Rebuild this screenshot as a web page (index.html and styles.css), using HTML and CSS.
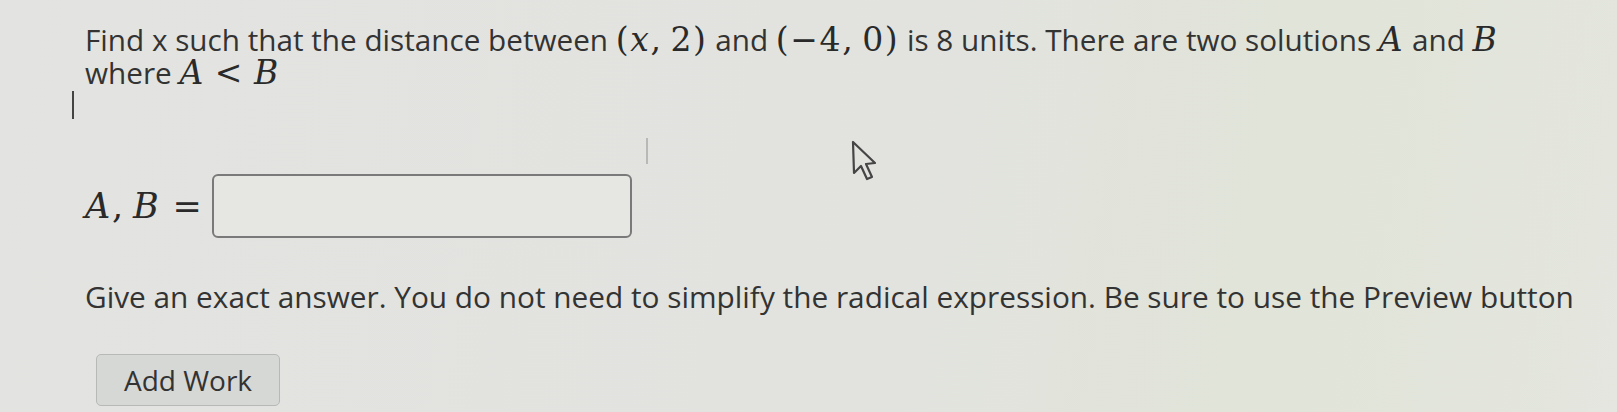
FILE: index.html
```html
<!DOCTYPE html>
<html>
<head>
<meta charset="utf-8">
<link rel="stylesheet" href="styles.css">
</head>
<body>
<div class="page">
  <p class="question">Find x such that the distance between <span class="m">(<i>x</i>,<span class="th"></span>2)</span> and <span class="m">(−4,<span class="th"></span>0)</span> is 8 units. There are two solutions <span class="m"><i>A</i></span> and <span class="m"><i>B</i></span><br>where <span class="m"><i>A</i><span class="rel">&lt;</span><i>B</i></span></p>
  <div class="caret-row"><span class="caret"></span></div>
  <div class="answer-row">
    <span class="m label"><i>A</i>,<span class="th"></span><i>B</i><span class="rel">=</span></span>
    <span class="answer-box"></span>
  </div>
  <p class="note">Give an exact answer. You do not need to simplify the radical expression. Be sure to use the Preview button</p>
  <button class="add-work">Add Work</button>
</div>
<span class="mark"></span>
<svg class="pointer" width="26" height="42" viewBox="0 0 26 42"><path d="M2 2 L3 33 L10 26 L16 39 L21 37 L15 24 L24 23 Z" fill="none" stroke="#454545" stroke-width="2.2" stroke-linejoin="round"/></svg>
</body>
</html>
```
FILE: styles.css
```css
html, body {
  margin: 0;
  padding: 0;
}
body {
  width: 1617px;
  height: 412px;
  overflow: hidden;
  position: relative;
  background: linear-gradient(100deg, #e3e4e1 0%, #e2e3df 55%, #e1e4d8 80%, #e4e6df 100%);
  color: #333;
  font-family: "Open Sans", "DejaVu Sans", sans-serif;
}
.page {
  padding: 23px 0 0 85px;
  display: flex;
  flex-direction: column;
  align-items: flex-start;
}
.question {
  margin: 0;
  font-size: 29.7px;
  line-height: 33px;
  white-space: nowrap;
}
.m {
  font-family: "DejaVu Serif", "Liberation Serif", serif;
  font-size: 33px;
  line-height: 1;
  letter-spacing: 1.6px;
  color: #2a2a2a;
}
.m i {
  font-style: italic;
}
.th {
  display: inline-block;
  width: 0.24em;
}
.rel {
  display: inline-block;
  margin: 0 0.3em;
}
.caret-row {
  height: 42px;
  display: flex;
  align-items: flex-start;
}
.caret {
  display: block;
  width: 2px;
  height: 28px;
  margin-left: -13px;
  margin-top: 2px;
  background: #444;
}
.answer-row {
  margin-top: 43px;
  display: flex;
  align-items: center;
  gap: 8px;
}
.label {
  font-size: 35px;
}
.label .rel {
  margin-left: 0.35em;
  margin-right: 0;
}
.answer-box {
  display: block;
  width: 420px;
  height: 64px;
  box-sizing: border-box;
  border: 2px solid #7a7a7a;
  border-radius: 6px;
  background: #e6e7e3;
}
.note {
  margin: 42px 0 0 0;
  font-size: 29.8px;
  line-height: 34px;
  white-space: nowrap;
}
.add-work {
  margin: 40px 0 0 11px;
  width: 184px;
  height: 52px;
  font-family: "Open Sans", "DejaVu Sans", sans-serif;
  font-size: 28px;
  color: #333;
  background: #d6d8d6;
  border: 1.5px solid #b7b9b7;
  border-radius: 5px;
}
.mark {
  position: absolute;
  left: 646px;
  top: 138px;
  width: 2px;
  height: 26px;
  background: #9a9c9a;
  opacity: 0.6;
}
.pointer {
  position: absolute;
  left: 851px;
  top: 140px;
}
```
